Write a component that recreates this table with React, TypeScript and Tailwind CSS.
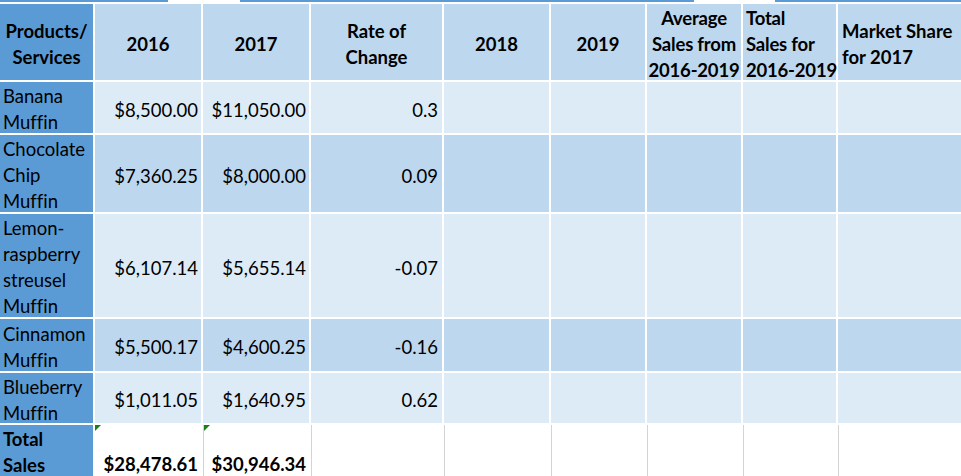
import React from 'react';

const font = { fontFamily: 'Lato, "Open Sans", sans-serif' };

type Row = {
  name: string[];
  y2016: string;
  y2017: string;
  rate: string;
  tone: 'light' | 'dark';
};

const rows: Row[] = [
  { name: ['Banana', 'Muffin'], y2016: '$8,500.00', y2017: '$11,050.00', rate: '0.3', tone: 'light' },
  { name: ['Chocolate', 'Chip', 'Muffin'], y2016: '$7,360.25', y2017: '$8,000.00', rate: '0.09', tone: 'dark' },
  {
    name: ['Lemon-', 'raspberry', 'streusel', 'Muffin'],
    y2016: '$6,107.14',
    y2017: '$5,655.14',
    rate: '-0.07',
    tone: 'light',
  },
  { name: ['Cinnamon', 'Muffin'], y2016: '$5,500.17', y2017: '$4,600.25', rate: '-0.16', tone: 'dark' },
  { name: ['Blueberry', 'Muffin'], y2016: '$1,011.05', y2017: '$1,640.95', rate: '0.62', tone: 'light' },
];

function Lines({ lines }: { lines: string[] }) {
  return (
    <>
      {lines.map((l) => (
        <div key={l}>{l}</div>
      ))}
    </>
  );
}

function GreenFlag() {
  return (
    <svg className="absolute left-0 top-0" width="6" height="6" viewBox="0 0 6 6">
      <polygon points="0,0 6,0 0,6" fill="#1a7f1a" />
    </svg>
  );
}

export default function App() {
  return (
    <div
      className="h-[476px] w-[961px] overflow-hidden bg-white text-[18.5px] leading-[26px] text-black [font-variant-ligatures:none]"
      style={font}
    >
      {/* edge of the table above */}
      <div className="flex h-[2px]">
        <div className="w-[168px] bg-[#5b9bd5]" />
        <div className="w-[72px]" />
        <div className="w-[454px] bg-[#5b9bd5]" />
        <div className="w-[81px]" />
        <div className="flex-1 bg-[#5b9bd5]" />
      </div>

      <div className="mt-[2px] grid grid-cols-[93px_106px_106px_131px_105px_94px_94px_93px_123px] grid-rows-[76px_51px_77px_103px_52px_50px_52px] gap-[2px]">
        {/* header */}
        <div className="flex flex-col items-center justify-center bg-[#5b9bd5] pt-[3px] text-center font-bold">
          <Lines lines={['Products/', 'Services']} />
        </div>
        <div className="flex items-center justify-center bg-[#bdd7ee] pt-[3px] font-bold">2016</div>
        <div className="flex items-center justify-center bg-[#bdd7ee] pt-[3px] font-bold">2017</div>
        <div className="flex flex-col items-center justify-center bg-[#bdd7ee] pt-[3px] text-center font-bold">
          <Lines lines={['Rate of', 'Change']} />
        </div>
        <div className="flex items-center justify-center bg-[#bdd7ee] pt-[3px] font-bold">2018</div>
        <div className="flex items-center justify-center bg-[#bdd7ee] pt-[3px] font-bold">2019</div>
        <div className="flex flex-col items-center justify-center whitespace-nowrap bg-[#bdd7ee] pt-[3px] text-center font-bold tracking-[-0.2px]">
          <Lines lines={['Average', 'Sales from', '2016-2019']} />
        </div>
        <div className="flex flex-col justify-center whitespace-nowrap bg-[#bdd7ee] pl-[3px] pt-[3px] font-bold tracking-[-0.2px]">
          <Lines lines={['Total', 'Sales for', '2016-2019']} />
        </div>
        <div className="flex flex-col justify-center whitespace-nowrap bg-[#bdd7ee] pl-[4px] pt-[3px] font-bold">
          <Lines lines={['Market Share', 'for 2017']} />
        </div>

        {/* body */}
        {rows.map((r) => {
          const bg = r.tone === 'light' ? 'bg-[#ddebf7]' : 'bg-[#bdd7ee]';
          return (
            <React.Fragment key={r.name.join(' ')}>
              <div className="flex flex-col justify-center whitespace-nowrap bg-[#5b9bd5] pl-[3px] pt-[3px]">
                <Lines lines={r.name} />
              </div>
              <div className={`flex items-center justify-end pr-[3px] pt-[4px] ${bg}`}>{r.y2016}</div>
              <div className={`flex items-center justify-end pr-[3px] pt-[4px] ${bg}`}>{r.y2017}</div>
              <div className={`flex items-center justify-end pr-[4px] pt-[4px] ${bg}`}>{r.rate}</div>
              <div className={bg} />
              <div className={bg} />
              <div className={bg} />
              <div className={bg} />
              <div className={bg} />
            </React.Fragment>
          );
        })}

        {/* totals */}
        <div className="flex flex-col bg-[#5b9bd5] pl-[3px] pt-[1px] font-bold">
          <Lines lines={['Total', 'Sales']} />
        </div>
        <div className="relative flex items-end justify-end pr-[3px] font-bold">
          <GreenFlag />
          $28,478.61
        </div>
        <div className="relative flex items-end justify-end border-l border-[#d4d4d4] pr-[3px] font-bold">
          <GreenFlag />
          $30,946.34
        </div>
        <div className="border-l border-[#d4d4d4]" />
        <div className="border-l border-[#d4d4d4]" />
        <div className="border-l border-[#d4d4d4]" />
        <div className="border-l border-[#d4d4d4]" />
        <div className="border-l border-[#d4d4d4]" />
        <div className="border-l border-[#d4d4d4]" />
      </div>
    </div>
  );
}
